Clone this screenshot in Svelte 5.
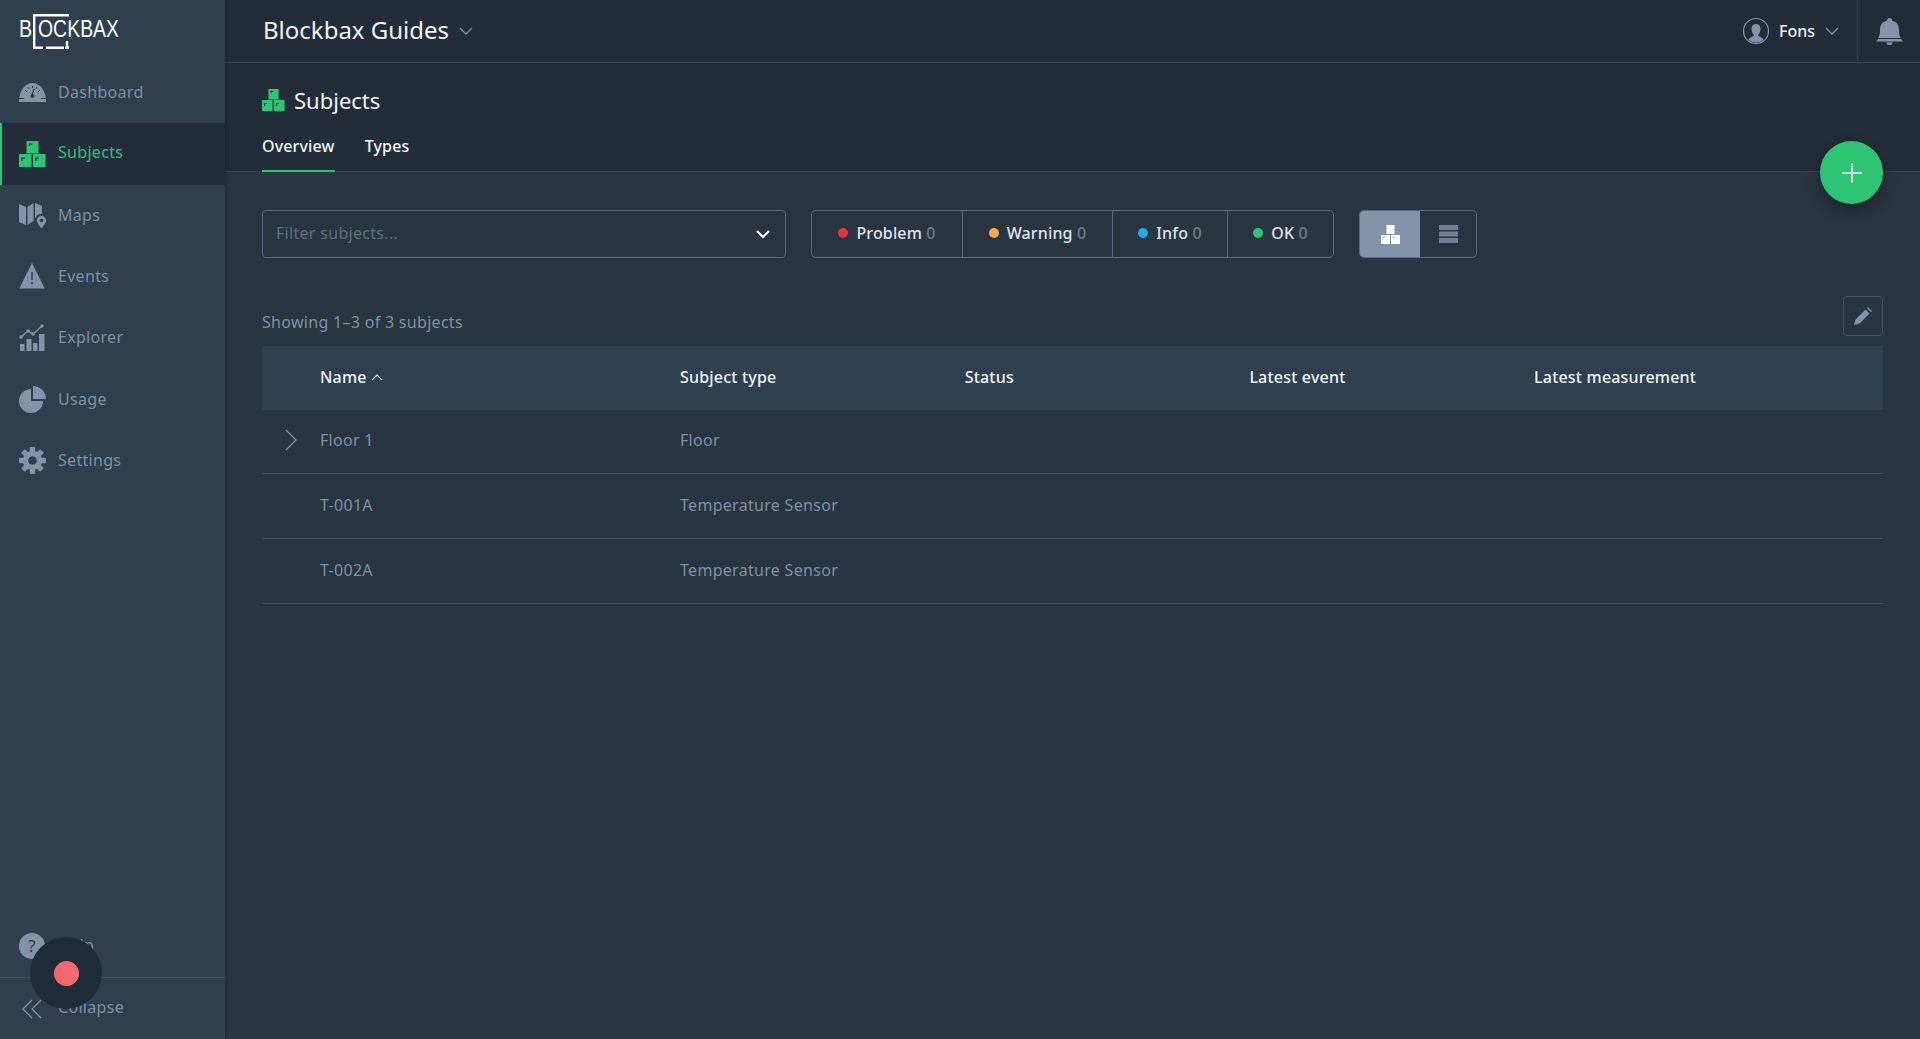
<script>
  const nav = [
    { label: "Dashboard", icon: "gauge" },
    { label: "Subjects", icon: "cubes", active: true },
    { label: "Maps", icon: "map" },
    { label: "Events", icon: "warn" },
    { label: "Explorer", icon: "chart" },
    { label: "Usage", icon: "pie" },
    { label: "Settings", icon: "gear" },
  ];
  const statuses = [
    { label: "Problem", color: "#e2363b", width: 150 },
    { label: "Warning", color: "#f5ad4d", width: 150 },
    { label: "Info", color: "#20a8f3", width: 115 },
    { label: "OK", color: "#2ec27a", width: 106 },
  ];
  const columns = ["Subject type", "Status", "Latest event", "Latest measurement"];
  const rows = [
    { name: "Floor 1", type: "Floor", expandable: true },
    { name: "T-001A", type: "Temperature Sensor" },
    { name: "T-002A", type: "Temperature Sensor" },
  ];
  const teeth = [0, 45, 90, 135, 180, 225, 270, 315];
</script>

{#snippet cubes(fill, mark)}
  <svg viewBox="0 0 27 26" class="cubes">
    <rect x="7.500" y="0" width="12" height="12.500" fill={fill} />
    <rect x="0" y="13" width="12.500" height="13" fill={fill} />
    <rect x="14" y="13" width="12.500" height="13" fill={fill} />
    <path d="M10.500 5V3h3M3 20v-3h3M17 20v-3h3" fill="none" stroke={mark} stroke-width="1.200" />
  </svg>
{/snippet}

<div class="app">
  <aside>
    <div class="logo">
      <span class="logo-b">B</span><span class="logo-rest">OCKBAX</span>
      <svg viewBox="0 0 36 35" class="frame">
        <path d="M1.200 35V1.200H36M0 33.800h10M13 33.800h18M34 27v8M32 33.800h4" fill="none" stroke="#fff" stroke-width="2.400" />
      </svg>
    </div>
    <nav>
      {#each nav as item}
        <div class="item" class:active={item.active}>
          <span class="ico">
            {#if item.icon == "gauge"}
              <svg viewBox="0 0 27 19" width="27" height="19">
                <path d="M0 18C0 8 6 0 13.500 0S27 8 27 18v1H0z" fill="#8393aa" />
                <path d="M13 12l2-6" stroke="#2f3f4e" stroke-width="1.400" />
                <circle cx="13.500" cy="13" r="2" fill="#2f3f4e" />
                <path d="M6 7l2 2M21 7l-2 2M13.500 3v2M9 4l1 2M18 4l-1 2M0 15.500h5M22 15.500h5" stroke="#2f3f4e" stroke-width="1" />
              </svg>
            {:else if item.icon == "cubes"}
              {@render cubes("#2dc574", "#222d39")}
            {:else if item.icon == "map"}
              <svg viewBox="0 0 28 27" width="28" height="27">
                <path d="M0 2l7 3v18l-7-3zM8.500 5l6-4v18l-6 4zM16 1l7 3v8a6 6 0 0 0-7 5z" fill="#8393aa" />
                <path d="M22.500 27c-3-4-5-6-5-8.500a5 5 0 0 1 10 0c0 2.500-2 4.500-5 8.500z" fill="#8393aa" stroke="#2f3f4e" stroke-width="0.800" />
                <circle cx="22.500" cy="18.500" r="1.800" fill="#2f3f4e" />
              </svg>
            {:else if item.icon == "warn"}
              <svg viewBox="0 0 26 26" width="26" height="26" class="up">
                <path d="M13 0l12.800 25.500H.2z" fill="#8393aa" />
                <path d="M13 9v8M13 19v2" stroke="#2f3f4e" stroke-width="1.500" />
              </svg>
            {:else if item.icon == "chart"}
              <svg viewBox="0 0 26 27" width="26" height="27">
                <path d="M1 20h4.500v7H1zM7.500 15h5v12h-5zM14 19h4.500v8H14zM20 10h5.500v17H20z" fill="#8393aa" />
                <path d="M2 13l7-6 5 3 9-8" fill="none" stroke="#8393aa" stroke-width="1.500" />
                <circle cx="9" cy="7" r="1.800" fill="#8393aa" /><circle cx="14" cy="10" r="1.800" fill="#8393aa" />
                <circle cx="23" cy="2" r="1.800" fill="#8393aa" /><circle cx="2" cy="13" r="1.800" fill="#8393aa" />
              </svg>
            {:else if item.icon == "pie"}
              <svg viewBox="0 0 27 27" width="27" height="27">
                <path d="M12 3a12 12 0 1 0 12 12H12z" fill="#8393aa" />
                <path d="M14 0a13 13 0 0 1 13 13H14z" fill="#8393aa" />
              </svg>
            {:else}
              <svg viewBox="-14 -14 28 28" width="27" height="27">
                <path fill-rule="evenodd" d="M0-10a10 10 0 1 1 0 20 10 10 0 0 1 0-20zM0-4.500a4.500 4.500 0 1 0 0 9 4.500 4.500 0 0 0 0-9z" fill="#8393aa" />
                {#each teeth as a}
                  <rect x="-2.800" y="-14" width="5.600" height="6" rx="1" fill="#8393aa" transform="rotate({a})" />
                {/each}
              </svg>
            {/if}
          </span>
          <span>{item.label}</span>
        </div>
      {/each}
    </nav>
    <div class="grow"></div>
    <div class="item help">
      <span class="ico">
        <svg viewBox="0 0 26 26" width="26" height="26">
          <circle cx="13" cy="13" r="13" fill="#8393aa" />
          <text x="13" y="19" text-anchor="middle" class="qmark">?</text>
        </svg>
      </span>
      <span>Help</span>
    </div>
    <div class="item collapse">
      <span class="ico">
        <svg viewBox="0 0 20 20" width="20" height="20">
          <path d="M10 1L1 10l9 9M19 1l-9 9 9 9" fill="none" stroke="#8393aa" stroke-width="1.300" />
        </svg>
      </span>
      <span>Collapse</span>
    </div>
    <div class="record"><span></span></div>
  </aside>

  <main>
    <header class="topbar">
      <div class="org">Blockbax Guides</div>
      <svg class="chev org-chev" viewBox="0 0 14 8"><path d="M1 1l6 6 6-6" /></svg>
      <div class="grow"></div>
      <svg viewBox="0 0 28 28" width="28" height="28" class="avatar">
        <circle cx="14" cy="14" r="12.500" fill="none" stroke="#8393aa" stroke-width="1.200" />
        <path d="M6.500 23c1-3 5-3.500 5.500-5-2-2-2.500-4-2.500-6.500 0-3 2-4.500 4.500-4.500s4.500 1.500 4.500 4.500c0 2.500-.5 4.500-2.500 6.500.5 1.500 4.500 2 5.500 5a12 12 0 0 1-15 0z" fill="#8393aa" />
      </svg>
      <div class="user">Fons</div>
      <svg class="chev user-chev" viewBox="0 0 14 8"><path d="M1 1l6 6 6-6" /></svg>
      <div class="bell">
        <svg viewBox="0 0 27 27" width="27" height="27">
          <path d="M13.500 0a2.500 2.500 0 0 1 2.500 2.500C21 4 23 7 23 12c0 4 .5 6 2 8H2c1.500-2 2-4 2-8 0-5 2-8 7-9.500A2.500 2.500 0 0 1 13.500 0z" fill="#8393aa" />
          <path d="M0 23.500l2-2.500h23l2 2.500zM10.500 24.300h6a3 3 0 0 1-6 0z" fill="#8393aa" />
        </svg>
      </div>
    </header>

    <section class="subheader">
      <h1>
        <span class="h1-ico">{@render cubes("#2dc574", "#222d39")}</span>
        Subjects
      </h1>
      <div class="tabs">
        <div class="tab on">Overview</div>
        <div class="tab">Types</div>
      </div>
    </section>

    <div class="fab">
      <svg viewBox="0 0 20 20" width="20" height="20"><path d="M10 0v20M0 10h20" stroke="#fff" stroke-width="1.600" /></svg>
    </div>

    <section class="content">
      <div class="filters">
        <div class="select">
          <span>Filter subjects...</span>
          <svg viewBox="0 0 14 9" width="14" height="9"><path d="M1 1l6 6 6-6" fill="none" stroke="#fff" stroke-width="2.200" /></svg>
        </div>
        <div class="status-group">
          {#each statuses as s}
            <div class="status" style="width:{s.width}px">
              <i style="background:{s.color}"></i>{s.label}&nbsp;<b>0</b>
            </div>
          {/each}
        </div>
        <div class="view-toggle">
          <div class="view on">
            <svg viewBox="0 0 19 19" width="19" height="19">
              <path d="M5.500 0h8v9h-8zM0 10h9v9H0zM10 10h9v9h-9z" fill="#fff" />
              <path d="M2 13v-1h2M12 13v-1h2" stroke="#8393aa" stroke-width="0.800" fill="none" />
            </svg>
          </div>
          <div class="view">
            <svg viewBox="0 0 19 18" width="19" height="18">
              <path d="M0 0h19v5H0zM0 6.500h19v5H0zM0 13h19v5H0z" fill="#6f7f96" />
            </svg>
          </div>
        </div>
      </div>

      <div class="count-row">
        <span>Showing 1–3 of 3 subjects</span>
        <div class="edit">
          <svg viewBox="0 0 18 18" width="18" height="18">
            <path d="M11.500 2.500l4 4L5.500 16.500 0 18l1.500-5.500zM13 1l1-1 4 4-1 1z" fill="#8393aa" />
          </svg>
        </div>
      </div>

      <div class="table">
        <div class="row head">
          <div class="cell name">
            Name
            <svg class="sort" viewBox="0 0 12 7"><path d="M1 6l5-5 5 5" /></svg>
          </div>
          {#each columns as c}
            <div class="cell">{c}</div>
          {/each}
        </div>
        {#each rows as row}
          <div class="row body">
            <div class="cell name">
              {#if row.expandable}
                <svg class="expand" viewBox="0 0 12 22"><path d="M1 1l10 10-10 10" /></svg>
              {/if}
              {row.name}
            </div>
            <div class="cell">{row.type}</div>
            <div class="cell"></div>
            <div class="cell"></div>
            <div class="cell"></div>
          </div>
        {/each}
      </div>
    </section>
  </main>
</div>

<style>
  :global(body) {
    margin: 0;
    background: #2a3542;
    font-family: "Noto Sans", "Open Sans", sans-serif;
    font-size: 16px;
    letter-spacing: 0.3px;
    color: #7f90a8;
  }
  .app {
    display: flex;
    height: 1039px;
    overflow: hidden;
  }
  aside {
    position: relative;
    display: flex;
    flex-direction: column;
    width: 225px;
    flex: none;
    background: #2f3f4e;
    box-shadow: 1px 0 3px rgba(0, 0, 0, 0.25);
    z-index: 2;
  }
  .logo {
    position: relative;
    height: 62px;
    font-family: "Liberation Sans", sans-serif;
    font-size: 24px;
    letter-spacing: 0;
    line-height: 58px;
    color: #fff;
    flex: none;
  }
  .logo-b {
    position: absolute;
    left: 19px;
    transform: scaleX(0.82);
    transform-origin: left;
  }
  .logo-rest {
    position: absolute;
    left: 38px;
    transform: scaleX(0.81);
    transform-origin: left;
  }
  .frame {
    position: absolute;
    left: 33px;
    top: 14px;
    width: 36px;
    height: 35px;
  }
  .item {
    display: flex;
    align-items: center;
    height: 61.3px;
    box-sizing: border-box;
    padding-left: 19px;
    flex: none;
  }
  .item.active {
    background: #242e3a;
    color: #2dc574;
    border-left: 2px solid #2dc574;
    padding-left: 17px;
  }
  .item.active span + span {
    margin-top: -3px;
  }
  .ico {
    display: flex;
    width: 39px;
    flex: none;
  }
  .ico + span {
    margin-top: -1px;
  }
  .help .ico + span,
  .collapse .ico + span {
    margin-top: -3px;
  }
  .up {
    margin-top: -2px;
  }
  .cubes {
    width: 27px;
    height: 26px;
  }
  .qmark {
    font-size: 17px;
    fill: #2f3f4e;
  }
  .grow {
    flex: 1;
  }
  .collapse {
    height: 62px;
    border-top: 1px solid #445362;
  }
  .collapse .ico {
    padding-left: 3px;
    width: 36px;
  }
  .record {
    position: absolute;
    left: 30px;
    top: 937px;
    width: 72px;
    height: 72px;
    border-radius: 50%;
    background: #212c3b;
    display: flex;
    align-items: center;
    justify-content: center;
  }
  .record span {
    width: 25px;
    height: 25px;
    border-radius: 50%;
    background: #f4696d;
  }
  main {
    position: relative;
    flex: 1;
    min-width: 0;
  }
  .topbar {
    display: flex;
    align-items: center;
    height: 62px;
    padding-left: 38px;
    background: #222d39;
    border-bottom: 1px solid #36424f;
  }
  .org {
    font-size: 24px;
    letter-spacing: 0;
    color: #f2f5f8;
    padding-bottom: 3px;
  }
  .chev {
    fill: none;
    stroke: #8393aa;
    stroke-width: 1.300;
    width: 14px;
    height: 8px;
  }
  .org-chev {
    margin-left: 10px;
  }
  .avatar {
    margin-right: 9px;
  }
  .user {
    color: #f2f5f8;
    font-weight: 500;
    letter-spacing: 0;
  }
  .user-chev {
    margin: 0 18px 0 10px;
  }
  .bell {
    display: flex;
    align-items: center;
    justify-content: center;
    width: 62px;
    height: 62px;
    border-left: 1px solid #36424f;
  }
  .subheader {
    height: 109px;
    padding-left: 37px;
    background: #222d39;
    border-bottom: 1px solid #36424f;
    box-sizing: border-box;
  }
  h1 {
    display: flex;
    align-items: center;
    gap: 7px;
    margin: 0;
    height: 74px;
    font-size: 22px;
    font-weight: 400;
    letter-spacing: 0;
    color: #f2f5f8;
  }
  .h1-ico {
    display: flex;
    transform: scale(0.85);
    margin-left: -2px;
  }
  .tabs {
    display: flex;
    gap: 30px;
  }
  .tab {
    height: 35px;
    box-sizing: border-box;
    color: #f2f5f8;
    font-weight: 500;
    letter-spacing: 0.15px;
    line-height: 19px;
  }
  .tab.on {
    border-bottom: 2px solid #2dc574;
  }
  .fab {
    position: absolute;
    left: 1595px;
    top: 141px;
    width: 63px;
    height: 63px;
    border-radius: 50%;
    background: #2dc574;
    box-shadow: 0 6px 14px rgba(0, 0, 0, 0.35);
    display: flex;
    align-items: center;
    justify-content: center;
  }
  .content {
    padding: 38px 37px 0 37px;
  }
  .filters {
    display: flex;
    height: 48px;
  }
  .select {
    display: flex;
    align-items: center;
    justify-content: space-between;
    width: 524px;
    box-sizing: border-box;
    padding: 0 15px 0 13px;
    border: 1px solid #5c6b7d;
    border-radius: 4px;
    color: #5f6e81;
  }
  .select span {
    margin-top: -2px;
  }
  .status-group {
    display: flex;
    margin-left: 25px;
    border: 1px solid #5c6b7d;
    border-radius: 5px;
  }
  .status {
    display: flex;
    align-items: center;
    justify-content: center;
    box-sizing: border-box;
    padding-bottom: 2px;
    color: #dfe5ee;
    font-weight: 500;
    letter-spacing: 0.15px;
    border-left: 1px solid #5c6b7d;
  }
  .status:first-child {
    border-left: 0;
  }
  .status i {
    width: 10px;
    height: 10px;
    border-radius: 50%;
    margin-right: 8px;
  }
  .status b {
    color: #6f7c8e;
    font-weight: 500;
  }
  .view-toggle {
    display: flex;
    margin-left: 25px;
    width: 118px;
    border: 1px solid #5c6b7d;
    border-radius: 5px;
    box-sizing: border-box;
    overflow: hidden;
  }
  .view {
    flex: 1;
    display: flex;
    align-items: center;
    justify-content: center;
  }
  .view.on {
    flex: none;
    width: 60px;
    background: #8393aa;
  }
  .count-row {
    display: flex;
    align-items: flex-end;
    justify-content: space-between;
    height: 88px;
    padding-bottom: 13px;
    box-sizing: border-box;
  }
  .edit {
    display: flex;
    align-items: center;
    justify-content: center;
    width: 40px;
    height: 40px;
    box-sizing: border-box;
    border: 1px solid #47535f;
    border-radius: 4px;
    margin-bottom: -3px;
  }
  .row {
    display: grid;
    grid-template-columns: 418px 284.7px 284.7px 284.7px 1fr;
    align-items: center;
  }
  .row.head {
    height: 64px;
    padding-bottom: 3px;
    box-sizing: border-box;
    background: #2f4050;
    color: #f2f5f8;
    font-weight: 500;
    letter-spacing: 0.2px;
  }
  .row.body {
    height: 65px;
    padding-bottom: 3px;
    border-bottom: 1px solid #44515f;
    box-sizing: border-box;
  }
  .row.body:first-of-type,
  .head + .body {
    height: 64px;
  }
  .cell.name {
    position: relative;
    padding-left: 58px;
  }
  .sort {
    width: 12px;
    height: 7px;
    margin-left: 0;
    vertical-align: 2px;
    fill: none;
    stroke: #f2f5f8;
    stroke-width: 1.200;
  }
  .expand {
    position: absolute;
    left: 23px;
    top: 0;
    width: 12px;
    height: 22px;
    fill: none;
    stroke: #8393aa;
    stroke-width: 1.200;
  }
</style>
